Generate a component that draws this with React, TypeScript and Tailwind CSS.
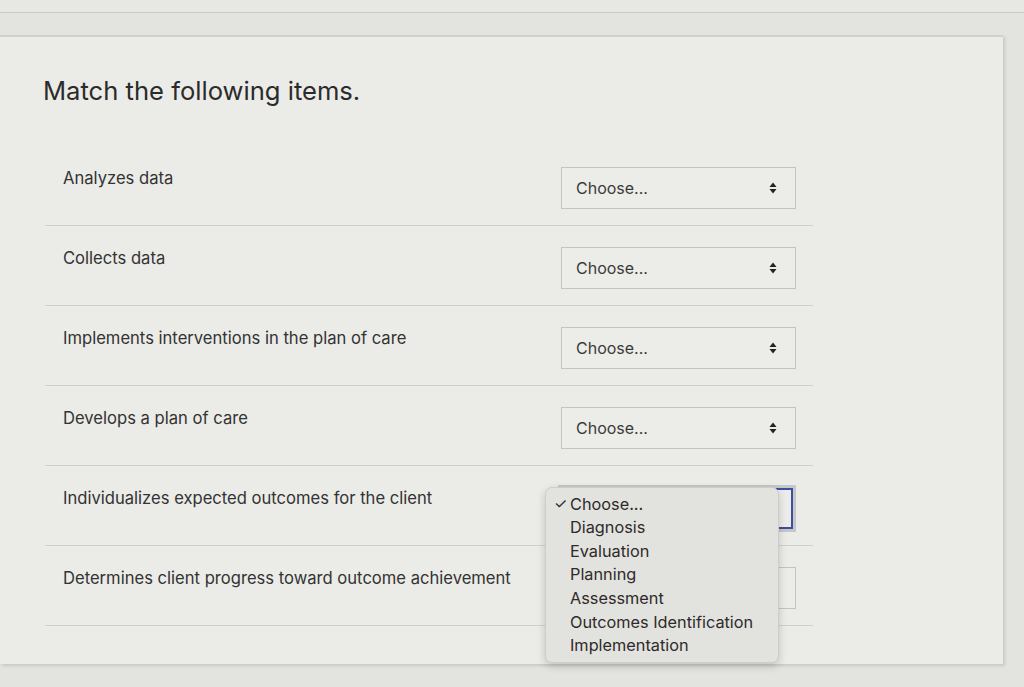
import React from "react";

const rows = [
  "Analyzes data",
  "Collects data",
  "Implements interventions in the plan of care",
  "Develops a plan of care",
  "Individualizes expected outcomes for the client",
  "Determines client progress toward outcome achievement",
];

const options = [
  "Choose...",
  "Diagnosis",
  "Evaluation",
  "Planning",
  "Assessment",
  "Outcomes Identification",
  "Implementation",
];

function Arrows() {
  return (
    <svg width="8" height="12" viewBox="0 0 8 12" className="shrink-0">
      <path d="M4 0.5 L7.5 5 L0.5 5 Z" fill="#222" />
      <path d="M4 11.5 L7.5 7 L0.5 7 Z" fill="#222" />
    </svg>
  );
}

function Select({ focused, hidden }: { focused?: boolean; hidden?: boolean }) {
  if (focused) {
    return (
      <div className="w-[238px] h-[47px] -ml-[4px] -mt-[2px] border-[3px] border-[#c6c7c8] bg-[#ecedeb]">
        <div className="w-full h-full border-2 border-[#3d4f9e]" />
      </div>
    );
  }
  return (
    <div className="w-[235px] h-[42px] border border-[#c4c5c2] bg-[#ecece9] flex items-center justify-between pl-[14px] pr-[18px]">
      <span className={hidden ? "invisible" : "text-[16px] text-[#3a3a3a]"}>Choose...</span>
      <Arrows />
    </div>
  );
}

export default function App() {
  return (
    <div
      className="w-[1024px] h-[687px] bg-[#e3e4df] overflow-hidden relative"
      style={{ fontFamily: 'Inter, "Liberation Sans", Arial, sans-serif' }}
    >
      <div className="h-[13px] border-b border-[#c9cac5] bg-[#e7e8e4]" />
      <div className="h-[22px]" />
      <div className="flex">
        <div className="w-[1003px] h-[629px] bg-[#ebebe8] border-t-2 border-[#d0d1cc] shadow-[2px_2px_3px_rgba(0,0,0,0.12)] pt-[37px] pl-[43px]">
          <h1 className="text-[25.6px] leading-[34px] text-[#2b2b2b]">Match the following items.</h1>
          <div className="mt-[38px] w-[768px] ml-[2px] flex flex-col">
            {rows.map((r, i) => (
              <div key={i} className="h-[80px] border-b border-[#cfd0cc] flex items-start justify-between pl-[18px] pr-[17px]">
                <div className="pt-[21px] text-[16.6px] leading-[22px] text-[#333]">{r}</div>
                <div className="pt-[21px]">
                  <Select focused={i === 4} hidden={i === 5} />
                </div>
              </div>
            ))}
          </div>
        </div>
        <div className="ml-[9px] w-px h-full bg-[#cfd0cb]" />
      </div>

      <div className="absolute left-[545px] top-[487px] w-[234px] h-[176px] rounded-[7px] bg-[#e2e2de] border border-[#cdcdc9] shadow-[0_3px_8px_rgba(0,0,0,0.18)] pt-[4px]">
        {options.map((o, i) => (
          <div key={o} className="flex items-center h-[23.6px] text-[16.3px] text-[#2e2a2a]">
            <span className="w-[24px] pl-[8px] text-[15px]">{i === 0 ? "✓" : ""}</span>
            <span>{o}</span>
          </div>
        ))}
      </div>
    </div>
  );
}
